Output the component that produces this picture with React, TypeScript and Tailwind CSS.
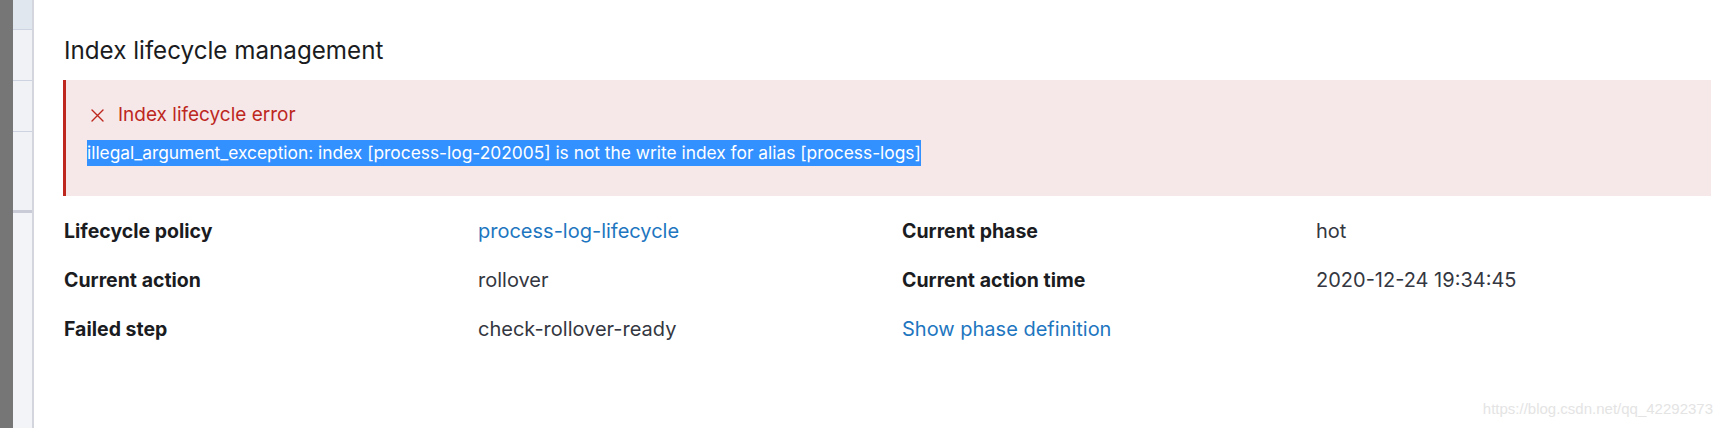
const rows = [
  [
    { label: 'Lifecycle policy', value: 'process-log-lifecycle', link: true },
    { label: 'Current phase', value: 'hot' },
  ],
  [
    { label: 'Current action', value: 'rollover' },
    { label: 'Current action time', value: '2020-12-24 19:34:45' },
  ],
  [{ label: 'Failed step', value: 'check-rollover-ready' }],
];

function LeftRail() {
  return (
    <div className="flex h-full shrink-0">
      <div className="w-[13px] bg-[#767676]" />
      <div className="flex w-[21px] flex-col border-r-2 border-[#d3d6dd] bg-[#f1f2f5]">
        <div className="h-[30px] border-b border-[#cdd3e0] bg-[#e1e7ef]" />
        <div className="h-[51px] border-b border-[#cdd3e0]" />
        <div className="h-[51px] border-b border-[#cdd3e0]" />
        <div className="h-[81px] border-b-[3px] border-[#c9ccd6]" />
        <div className="flex-1 bg-[#f3f4f7]" />
      </div>
    </div>
  );
}

export default function App() {
  return (
    <div
      className="relative flex h-[428px] w-full overflow-hidden bg-white text-[#343741]"
      style={{ fontFamily: 'Inter, "Noto Sans", sans-serif' }}
    >
      <LeftRail />
      <main className="flex-1 pl-[30px] pr-[11px] pt-[35px]">
        <h2 className="text-[24.2px] leading-[32px] text-[#1a1c21]">Index lifecycle management</h2>

        <div className="mt-[13px] -ml-[1px] border-l-[3px] border-[#bd271e] bg-[#f6e8e8] pb-[30px] pl-[21px] pt-[23px]">
          <div className="flex items-center pl-[4px] text-[19px] leading-[24px] text-[#bd271e]">
            <svg width="13" height="13" viewBox="0 0 13 13" className="mr-[14px]">
              <path d="M1 1L12 12M12 1L1 12" stroke="#bd271e" strokeWidth="1.4" strokeLinecap="round" />
            </svg>
            Index lifecycle error
          </div>
          <div className="mt-[13px]">
            <span className="inline-block bg-[#3390ff] text-[17.35px] leading-[26px] text-white">
              illegal_argument_exception: index [process-log-202005] is not the write index for alias [process-logs]
            </span>
          </div>
        </div>

        <div className="mt-[21px] grid grid-cols-[414px_424px_414px_1fr] gap-y-[21px] text-[20px] leading-[28px]">
          {rows.map((row, i) => (
            <div key={i} className="contents">
              {row.map((item) => (
                <div key={item.label} className="contents">
                  <div className="text-[19.5px] font-bold text-[#1a1c21]">{item.label}</div>
                  <div className={item.link ? 'text-[#1e76c0]' : 'text-[#343741]'}>{item.value}</div>
                </div>
              ))}
              {i === 2 && <div className="text-[#1e76c0]">Show phase definition</div>}
            </div>
          ))}
        </div>
      </main>

      <div
        className="absolute bottom-[8px] right-[9px] text-[15px] text-[#e4e4e4]"
        style={{ fontFamily: '"Liberation Sans", Arial, sans-serif' }}
      >
        https://blog.csdn.net/qq_42292373
      </div>
    </div>
  );
}
